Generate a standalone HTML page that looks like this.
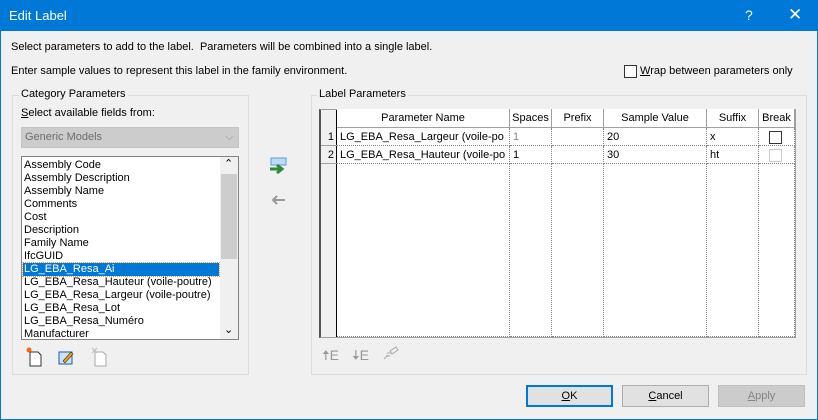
<!DOCTYPE html><html><head><style>
*{margin:0;padding:0;box-sizing:border-box}
body{width:818px;height:420px;background:#f0f0f0;font-family:"Liberation Sans",sans-serif;font-size:11px;color:#000;position:relative;overflow:hidden}
.a{position:absolute;white-space:nowrap}
.tb{left:0;top:0;width:818px;height:31px;background:#0078d7;color:#fff}
.grp{border:1px solid #dcdcdc}
.leg{background:#f0f0f0;padding:0 2px}
.li{position:absolute;left:24px;height:13px;line-height:13px;white-space:nowrap}
.cell{position:absolute;height:18px;line-height:18px;padding-left:3px;border-right:1px dotted #888;border-bottom:1px dotted #888;white-space:nowrap;overflow:hidden}
.hd{position:absolute;top:109px;height:19px;line-height:19px;text-align:center;border-right:1px solid #a0a0a0;border-bottom:1px solid #a0a0a0;white-space:nowrap;overflow:hidden}
.btn{position:absolute;top:385px;width:87px;height:22px;border:1px solid #adadad;background:#e1e1e1;text-align:center;line-height:20px}
</style></head><body>
<div style="position:absolute;left:0;top:0;width:818px;height:420px;border:1px solid #0078d7"></div>
<div class="a tb"><span class="a" style="left:9px;top:8px;font-size:13px">Edit Label</span><span class="a" style="left:745px;top:7px;font-size:14px">?</span><span class="a" style="left:788px;top:5px;font-size:17px">✕</span></div>
<div class="a" style="left:11px;top:41px">Select parameters to add to the label.&nbsp; Parameters will be combined into a single label.</div>
<div class="a" style="left:11px;top:65px">Enter sample values to represent this label in the family environment.</div>
<div class="a" style="left:624px;top:65px;width:13px;height:13px;border:1px solid #333;background:#fff"></div>
<div class="a" style="left:640px;top:65px"><u>W</u>rap between parameters only</div>

<div class="a grp" style="left:12px;top:95px;width:237px;height:280px"></div>
<div class="a leg" style="left:19px;top:88px">Category Parameters</div>
<div class="a" style="left:21px;top:107px"><u>S</u>elect available fields from:</div>
<div class="a" style="left:21px;top:127px;width:218px;height:21px;background:#cccccc;border:1px solid #c4c4c4;color:#6d6d6d;line-height:19px;padding-left:3px">Generic Models<span class="a" style="left:203px;top:0;color:#999">⌵</span></div>
<div class="a" style="left:21px;top:156px;width:218px;height:184px;background:#fff;border:1px solid #828282;overflow:hidden">
<div class="a" style="left:198px;top:0;width:18px;height:182px;background:#f0f0f0"></div>
<div class="a" style="left:199px;top:17px;width:16px;height:85px;background:#cdcdcd"></div>
<div class="a" style="left:202px;top:0;font-size:11px">⌃</div>
<div class="a" style="left:202px;top:166px;font-size:11px">⌄</div>
<div class="a" style="left:1px;top:106px;width:196px;height:13px;background:#0078d7;outline:1px dotted #f0a030"></div>
</div>
<div class="a" style="left:0;top:159px">
<div class="li" style="top:0">Assembly Code</div>
<div class="li" style="top:13px">Assembly Description</div>
<div class="li" style="top:26px">Assembly Name</div>
<div class="li" style="top:39px">Comments</div>
<div class="li" style="top:52px">Cost</div>
<div class="li" style="top:65px">Description</div>
<div class="li" style="top:78px">Family Name</div>
<div class="li" style="top:91px">IfcGUID</div>
<div class="li" style="top:104px;color:#fff">LG_EBA_Resa_Ai</div>
<div class="li" style="top:117px">LG_EBA_Resa_Hauteur (voile-poutre)</div>
<div class="li" style="top:130px">LG_EBA_Resa_Largeur (voile-poutre)</div>
<div class="li" style="top:143px">LG_EBA_Resa_Lot</div>
<div class="li" style="top:156px">LG_EBA_Resa_Numéro</div>
<div class="li" style="top:169px">Manufacturer</div>
</div>
<svg class="a" style="left:25px;top:346px" width="90" height="22">
<path d="M5 6h8l3 3v11H5z" fill="#fff" stroke="#333"/><circle cx="4" cy="4" r="2.5" fill="#f60"/>
<rect x="34" y="6" width="13" height="12" fill="#cfe3f8" stroke="#1e5aa8"/><path d="M38 15l8-9 2 2-8 9z" fill="#f0a000" stroke="#333" stroke-width=".6"/>
<path d="M70 6h8l3 3v11H70z" fill="#fff" stroke="#aaa"/><path d="M67 2l5 5M72 2l-5 5" stroke="#bbb"/>
</svg>
<svg class="a" style="left:268px;top:156px" width="24" height="50">
<rect x="3" y="2" width="15" height="7" fill="#bcdcf6" stroke="#5a9bd8"/><path d="M2 13h10M9 9l5 4-5 4" stroke="#2e8b3a" stroke-width="3" fill="none"/>
<path d="M5 44h12M9 40l-4 4 4 4" stroke="#999" stroke-width="2" fill="none"/>
</svg>

<div class="a grp" style="left:311px;top:95px;width:496px;height:280px"></div>
<div class="a leg" style="left:317px;top:88px">Label Parameters</div>
<div class="a" style="left:319px;top:109px;width:477px;height:229px;background:#fff;border:1px solid #a0a0a0;border-left:2px solid #555"></div>
<div class="a" style="left:321px;top:110px;width:16px;height:227px;background:#f0f0f0;border-right:1px solid #000"></div>
<div class="hd" style="left:337px;width:173px;background:#fff">Parameter Name</div>
<div class="hd" style="left:510px;width:42px;background:#fff">Spaces</div>
<div class="hd" style="left:552px;width:52px;background:#fff">Prefix</div>
<div class="hd" style="left:604px;width:103px;background:#fff">Sample Value</div>
<div class="hd" style="left:707px;width:52px;background:#fff">Suffix</div>
<div class="hd" style="left:759px;width:36px;background:#fff">Break</div>
<div class="a" style="left:321px;top:128px;width:16px;height:18px;line-height:18px;text-align:right;padding-right:3px;border-bottom:1px solid #a0a0a0">1</div>
<div class="a" style="left:321px;top:146px;width:16px;height:18px;line-height:18px;text-align:right;padding-right:3px;border-bottom:1px solid #a0a0a0">2</div>
<div class="cell" style="left:337px;top:128px;width:173px">LG_EBA_Resa_Largeur (voile-po</div>
<div class="cell" style="left:510px;top:128px;width:42px;color:#888">1</div>
<div class="cell" style="left:552px;top:128px;width:52px"></div>
<div class="cell" style="left:604px;top:128px;width:103px">20</div>
<div class="cell" style="left:707px;top:128px;width:52px">x</div>
<div class="cell" style="left:759px;top:128px;width:36px"><div class="a" style="left:10px;top:3px;width:13px;height:13px;border:1px solid #333"></div></div>
<div class="cell" style="left:337px;top:146px;width:173px">LG_EBA_Resa_Hauteur (voile-po</div>
<div class="cell" style="left:510px;top:146px;width:42px">1</div>
<div class="cell" style="left:552px;top:146px;width:52px"></div>
<div class="cell" style="left:604px;top:146px;width:103px">30</div>
<div class="cell" style="left:707px;top:146px;width:52px">ht</div>
<div class="cell" style="left:759px;top:146px;width:36px"><div class="a" style="left:10px;top:3px;width:13px;height:13px;border:1px solid #ccc"></div></div>
<div class="cell" style="left:337px;top:164px;width:173px;height:173px"></div>
<div class="cell" style="left:510px;top:164px;width:42px;height:173px"></div>
<div class="cell" style="left:552px;top:164px;width:52px;height:173px"></div>
<div class="cell" style="left:604px;top:164px;width:103px;height:173px"></div>
<div class="cell" style="left:707px;top:164px;width:52px;height:173px"></div>
<div class="cell" style="left:759px;top:164px;width:36px;height:173px"></div>
<div class="a" style="left:322px;top:345px;color:#999;font-size:14px">🠅E</div>
<div class="a" style="left:352px;top:345px;color:#999;font-size:14px">🠇E</div>
<svg class="a" style="left:382px;top:345px" width="18" height="16"><path d="M2 14l4-4M5 8h4M4 11h4M8 6l6-4 2 3-6 4z" stroke="#aaa" fill="none"/></svg>

<div class="btn" style="left:526px;border:2px solid #0078d7;line-height:18px"><u>O</u>K</div>
<div class="btn" style="left:622px"><u>C</u>ancel</div>
<div class="btn" style="left:718px;background:#cccccc;border-color:#bfbfbf;color:#838383"><u>A</u>pply</div>
</body></html>
